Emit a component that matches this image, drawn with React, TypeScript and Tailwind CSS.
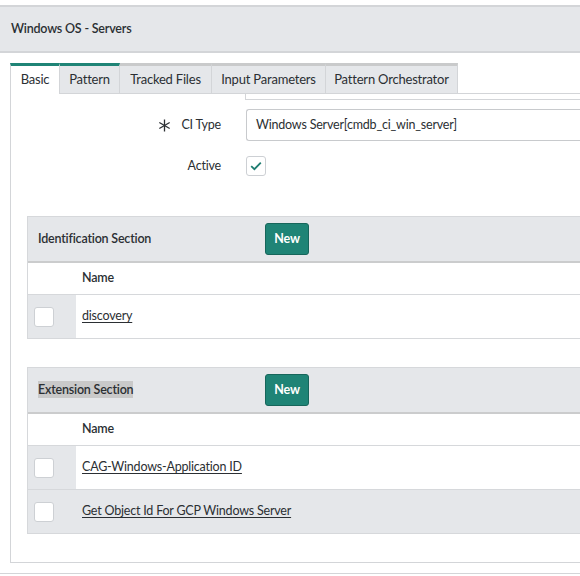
import React from 'react';

const TABS = [
  { label: 'Basic', w: 'w-[50px]', active: true, teal: true },
  { label: 'Pattern', w: 'w-[60px]', active: false, teal: true },
  { label: 'Tracked Files', w: 'w-[92px]', active: false, teal: false },
  { label: 'Input Parameters', w: 'w-[114px]', active: false, teal: false },
  { label: 'Pattern Orchestrator', w: 'w-[132px]', active: false, teal: false },
];

function Checkbox({ checked = false }: { checked?: boolean }) {
  return (
    <div className="w-[20px] h-[20px] border border-[#cdd0d4] rounded-[3px] bg-white flex items-center justify-center">
      {checked && (
        <svg width="12" height="10" viewBox="0 0 12 10" fill="none">
          <path d="M1.2 5.2 L4.4 8.2 L10.8 1.6" stroke="#1f7d71" strokeWidth="1.8" />
        </svg>
      )}
    </div>
  );
}

function Section({ title, rows, highlight }: { title: string; rows: string[]; highlight?: boolean }) {
  return (
    <div className="border-l border-t border-[#d6d8db]">
      {/* header */}
      <div className="h-[46px] bg-[#e5e7ea] border-b-2 border-[#cbcccd] flex items-center">
        <div className="w-[237px] pl-[10px] text-[12.5px] font-semibold text-[#2b2f33]">
          <span className={highlight ? 'bg-[#c9c9c9] py-[1px]' : ''}>{title}</span>
        </div>
        <button className="h-[32px] w-[44px] rounded-[3px] bg-[#1f8476] border border-[#17665b] text-white text-[12.5px] font-bold">
          New
        </button>
      </div>
      {/* column header */}
      <div className="h-[32px] flex items-center border-b border-[#d6d8db]">
        <div className="w-[54px]" />
        <div className="text-[12.5px] font-semibold text-[#2b2f33]">Name</div>
      </div>
      {rows.map((r, i) => (
        <div
          key={r}
          className={`h-[44px] flex items-center border-b border-[#d6d8db] ${i === 1 ? 'bg-[#e5e7ea]' : ''}`}
        >
          <div className="w-[48px] h-full bg-[#e5e7ea] flex items-center pl-[6px]">
            <Checkbox />
          </div>
          <a className="ml-[6px] text-[12.5px] text-[#2b2f33] underline underline-offset-2">{r}</a>
        </div>
      ))}
    </div>
  );
}

export default function App() {
  return (
    <div
      className="w-[580px] h-[576px] overflow-hidden bg-white text-[#2b2f33] tracking-[-0.2px]"
      style={{ fontFamily: 'Lato, "Open Sans", sans-serif' }}
    >
      <div className="pt-[5px]">
        <div className="h-[48px] bg-[#e5e7ea] border-t-2 border-b-2 border-[#d3d5d8] flex items-center pl-[11px]">
          <span className="text-[12.5px] font-semibold">Windows OS - Servers</span>
        </div>
      </div>

      {/* tabs */}
      <div className="mt-[10px] ml-[10px] flex h-[31px]">
        {TABS.map((t) => (
          <div
            key={t.label}
            className={`${t.w} h-full flex items-center justify-center text-[13px] border-t-[3px] border-r border-[#d3d5d8] ${
              t.teal ? 'border-t-[#1f8476]' : 'border-t-[#c9cacb]'
            } ${t.active ? 'bg-white border-l' : 'bg-[#e5e7ea] border-b'}`}
          >
            {t.label}
          </div>
        ))}
        <div className="flex-1 border-b border-[#d3d5d8]" />
      </div>

      {/* panel */}
      <div className="ml-[10px] h-[469px] border-l border-b border-[#d3d5d8]">
        <div className="ml-[234px] h-[6px] border-l border-b border-[#d3d5d8]" />

        <div className="mt-[9px] flex items-center h-[32px]">
          <div className="w-[210px] flex items-center justify-end gap-[10px]">
            <svg width="13" height="13" viewBox="0 0 13 13" fill="none" stroke="#2b2f33" strokeWidth="1.3">
              <path d="M6.5 0.5 V12.5" />
              <path d="M1.3 3.5 L11.7 9.5" />
              <path d="M1.3 9.5 L11.7 3.5" />
            </svg>
            <span className="text-[12.5px]">CI Type</span>
          </div>
          <div className="ml-[25px] flex-1 h-full border border-r-0 border-[#c8cacd] rounded-l-[3px] flex items-center pl-[9px] text-[12.5px]">
            Windows Server[cmdb_ci_win_server]
          </div>
        </div>

        <div className="mt-[15px] flex items-center h-[20px]">
          <div className="w-[210px] text-right text-[12.5px]">Active</div>
          <div className="ml-[25px]">
            <Checkbox checked />
          </div>
        </div>

        <div className="mt-[40px] ml-[16px]">
          <Section title="Identification Section" rows={['discovery']} />
        </div>

        <div className="mt-[28px] ml-[16px]">
          <Section
            title="Extension Section"
            highlight
            rows={['CAG-Windows-Application ID', 'Get Object Id For GCP Windows Server']}
          />
        </div>
      </div>

      <div className="mt-[10px] border-t border-[#d3d5d8]" />
    </div>
  );
}
